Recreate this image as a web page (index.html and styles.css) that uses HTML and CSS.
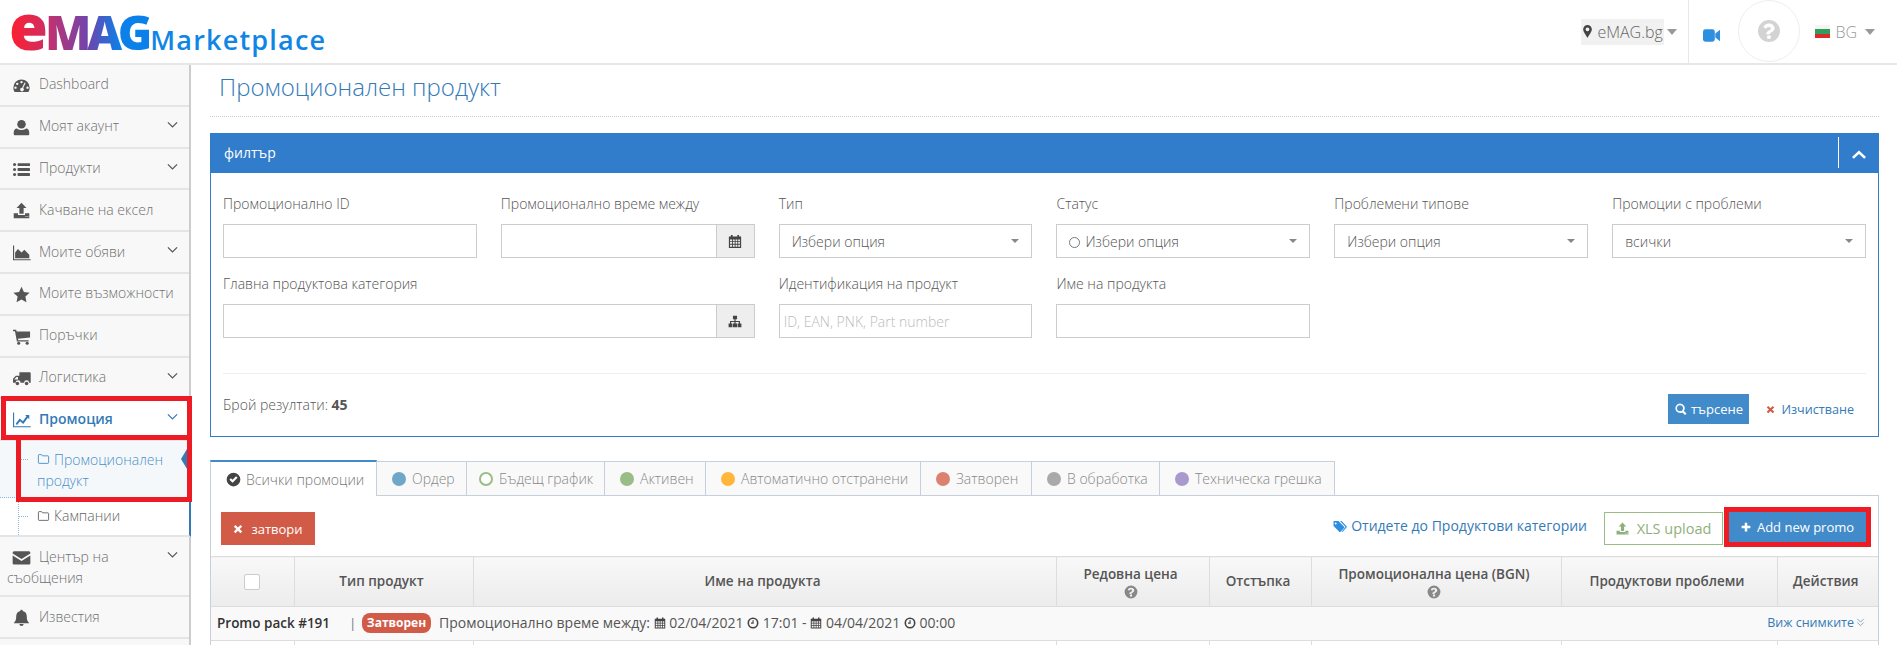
FILE: index.html
```html
<!DOCTYPE html>
<html lang="bg">
<head>
<meta charset="utf-8">
<title>Промоционален продукт</title>
<link rel="stylesheet" href="styles.css">
</head>
<body>
<svg class="defs" width="0" height="0" aria-hidden="true">
  <defs>
    <symbol id="i-gauge" viewBox="0 0 24 24"><path fill-rule="evenodd" d="M12 3.5A11.5 11.5 0 0 0 .5 15c0 2.300.7 4.400 1.800 6h19.400c1.100-1.600 1.800-3.700 1.800-6A11.500 11.500 0 0 0 12 3.500zM12 5.500a1.700 1.700 0 1 1 0 3.400a1.700 1.700 0 0 1 0-3.400zM6 8a1.700 1.700 0 1 1 0 3.400A1.700 1.700 0 0 1 6 8zM3.500 13.300a1.700 1.700 0 1 1 0 3.400a1.700 1.700 0 0 1 0-3.400zM20.500 13.300a1.700 1.700 0 1 1 0 3.400a1.700 1.700 0 0 1 0-3.400zM16.400 7.800l1.400.7l-3.400 7.200a2.600 2.600 0 1 1-1.500-.6z"/></symbol>
    <symbol id="i-user" viewBox="0 0 24 24"><circle cx="12" cy="7.500" r="6"/><path d="M3 23c-1.200 0-2-.8-2-2.200c0-3.800 1-7.300 4.500-7.300c1.500 1.300 3.800 2.200 6.500 2.200s5-.9 6.500-2.200c3.500 0 4.500 3.500 4.500 7.300c0 1.400-.8 2.200-2 2.200z"/></symbol>
    <symbol id="i-list" viewBox="0 0 24 24"><circle cx="2.200" cy="5" r="2.200"/><circle cx="2.200" cy="12" r="2.200"/><circle cx="2.200" cy="19" r="2.200"/><rect x="6.500" y="3" width="17.500" height="4" rx=".6"/><rect x="6.500" y="10" width="17.500" height="4" rx=".6"/><rect x="6.500" y="17" width="17.500" height="4" rx=".6"/></symbol>
    <symbol id="i-upload" viewBox="0 0 24 24"><path d="M12 1l7 7.500h-4v8h-6v-8H5z"/><path fill-rule="evenodd" d="M1 16h6v2.500h10V16h6v7H1zM17.500 20v1.200h1.400V20zM20.400 20v1.200h1.400V20z"/></symbol>
    <symbol id="i-area" viewBox="0 0 26 24"><path d="M1 2h1.600v19.500H26V23H1z"/><path d="M4 20v-8l4-5l5 5l4-4l7 7v5z"/></symbol>
    <symbol id="i-star" viewBox="0 0 24 24"><path d="M12 1l3.400 7.400l8 1l-5.900 5.500l1.500 8L12 19l-7 3.900l1.500-8L.6 9.400l8-1z"/></symbol>
    <symbol id="i-cart" viewBox="0 0 26 24"><path d="M1 2.500h4.500l.6 2.500h19v8.500L8 15.200l.4 2H23v2H6.500L3.800 4.500H1z"/><circle cx="9" cy="21.500" r="2.200"/><circle cx="21" cy="21.500" r="2.200"/></symbol>
    <symbol id="i-truck" viewBox="0 0 26 24"><path fill-rule="evenodd" d="M10 3h14.500c.8 0 1.500.7 1.500 1.500V18h-2.300a3.500 3.500 0 0 0-7 0h-5a3.500 3.500 0 0 0-7 0H1v-5.500L5 8h5zM8 10H5.800L3 13v.5h5z"/><circle cx="7.200" cy="19" r="2.500"/><circle cx="20.200" cy="19" r="2.500"/></symbol>
    <symbol id="i-line" viewBox="0 0 26 24"><path d="M1 2h1.600v19.500H26V23H1z"/><path d="M5 17.500l5.500-7l4.500 4l5-7l-2-2h6v6l-2-2l-6.500 9l-4.500-4l-4.500 5.500z"/></symbol>
    <symbol id="i-mail" viewBox="0 0 26 24"><path d="M3 3h20c1.400 0 2.500 1 2.500 2.200v1l-12.500 7.800L.5 6.200v-1C.5 4 1.600 3 3 3z"/><path d="M.5 9l12.500 7.800L25.500 9v11c0 1.300-1.100 2-2.500 2H3c-1.400 0-2.500-.7-2.500-2z"/></symbol>
    <symbol id="i-bell" viewBox="0 0 24 24"><path d="M12 1a1.700 1.700 0 0 1 1.700 1.900c3.800.8 5.800 3.700 5.800 7.600c0 5.500 1.400 7 3.500 9.500H1c2.100-2.500 3.500-4 3.500-9.500c0-3.900 2-6.800 5.800-7.600A1.700 1.700 0 0 1 12 1z"/><path d="M9 21h6a3 3 0 0 1-6 0z"/></symbol>
    <symbol id="i-chev" viewBox="0 0 12 8"><path d="M1 1.200l5 5l5-5" fill="none" stroke="currentColor" stroke-width="1.300"/></symbol>
    <symbol id="i-folder" viewBox="0 0 14 12"><path d="M1.500 10V2c0-.4.300-.7.700-.7h2.800l1 1.300h5.800c.4 0 .7.300.7.700V10c0 .4-.3.700-.7.700H2.200c-.4 0-.7-.3-.7-.7z" fill="none" stroke="currentColor" stroke-width="1"/></symbol>
    <symbol id="i-check" viewBox="0 0 24 24"><path fill-rule="evenodd" d="M12 1a11 11 0 1 1 0 22a11 11 0 0 1 0-22zM5.500 12.200l5 5l8-8l-2.400-2.400l-5.600 5.600l-2.600-2.600z"/></symbol>
    <symbol id="i-times" viewBox="0 0 24 24"><path d="M6 2.500l6 6l6-6l4 4l-6 5.500l6 6l-4 4l-6-6l-6 6l-4-4l6-6l-6-5.500z"/></symbol>
    <symbol id="i-plus" viewBox="0 0 24 24"><path d="M9 2h6v7h7.500v6H15v7.500H9V15H1.500V9H9z"/></symbol>
    <symbol id="i-search" viewBox="0 0 24 24"><path fill-rule="evenodd" d="M10 1a9.500 9.500 0 0 1 7.800 14.900l5.200 5.200l-3 3l-5.200-5.200A9.500 9.500 0 1 1 10 1zM10 4.500a6 6 0 1 0 0 12a6 6 0 0 0 0-12z"/></symbol>
    <symbol id="i-cal" viewBox="0 0 24 24"><path fill-rule="evenodd" d="M5 1h3v2.500h8V1h3v2.500h3.500V23h-21V3.500H5zM3.500 8.500v3h3.500v-3zM8.500 8.500v3h3v-3zM13 8.500v3h3v-3zM17.500 8.500v3h3v-3zM3.500 13v3h3.500v-3zM8.500 13v3h3v-3zM13 13v3h3v-3zM17.500 13v3h3v-3zM3.500 17.500v3.500h3.500v-3.500zM8.500 17.500v3.500h3v-3.500zM13 17.500v3.500h3v-3.500zM17.500 17.500v3.500h3v-3.500z"/></symbol>
    <symbol id="i-clock" viewBox="0 0 24 24"><path fill-rule="evenodd" d="M12 1a11 11 0 1 1 0 22a11 11 0 0 1 0-22zM12 4.200a7.800 7.800 0 1 0 0 15.600a7.800 7.800 0 0 0 0-15.600zM11 6.500h2.300v6.800H8v-2.200h3z"/></symbol>
    <symbol id="i-sitemap" viewBox="0 0 24 24"><path d="M8.500 2h7v6h-2.500v3h7.500v4.500H23V22h-6.500v-6.500h2V13H13v2.500h2.500V22h-7v-6.500H11V13H5.500v2.500h2V22H1v-6.500h2.500V11H11V8H8.500z"/></symbol>
    <symbol id="i-tags" viewBox="0 0 26 24"><path d="M2 2h9l10.500 10.500c.7.700.7 1.700 0 2.400L14.900 21.500c-.7.700-1.700.7-2.400 0L2 11zM6 4.500a1.800 1.800 0 1 0 0 3.600a1.800 1.800 0 0 0 0-3.600z" fill-rule="evenodd"/><path d="M14 2h3l9 9.500c.7.700.7 1.700 0 2.400L19 21.500h-2.500l7-7.500c.5-.6.500-1.200 0-1.800z"/></symbol>
    <symbol id="i-help" viewBox="0 0 24 24"><path fill-rule="evenodd" d="M12 1a11 11 0 1 1 0 22a11 11 0 0 1 0-22zM10.200 16.400v3.400h3.600v-3.400zM12 4.600c-2.800 0-4.800 1.400-5.500 3.600l2.500 1.500c.5-1 1.300-1.800 2.800-1.800c1.200 0 2 .6 2 1.500c0 1-.9 1.400-2 2.100c-1.400.9-2.600 1.700-2.600 3.500v.3h3.600c0-1.100.8-1.500 1.800-2.100c1.500-.9 3-1.900 3-4c0-2.700-2.700-4.600-5.600-4.600z"/></symbol>
    <symbol id="i-pin" viewBox="0 0 16 24"><path fill-rule="evenodd" d="M8 0a8 8 0 0 1 8 8c0 4-5 11-8 16C5 19 0 12 0 8a8 8 0 0 1 8-8zM8 4.500a3.500 3.500 0 1 0 0 7a3.500 3.500 0 0 0 0-7z"/></symbol>
    <symbol id="i-video" viewBox="0 0 18 13"><rect x="0" y="0" width="12.500" height="13" rx="2.500"/><path d="M13 4.500L18 .5v12L13 8.500z"/></symbol>
    <symbol id="i-up" viewBox="0 0 14 9"><path d="M7 .5l7 6.500l-1.800 1.800L7 4L1.800 8.800L0 7z"/></symbol>
    <symbol id="i-dbl" viewBox="0 0 10 10"><path d="M1.500 1l3.500 3.500L8.500 1M1.500 5l3.500 3.500L8.500 5" fill="none" stroke="currentColor" stroke-width="1"/></symbol>
  </defs>
</svg>

<header class="topbar">
  <a class="logo" href="#" aria-label="eMAG Marketplace">
    <span class="logo-e">e</span><span class="logo-mag">MAG</span><span class="logo-mp">Marketplace</span>
  </a>
  <div class="top-right">
    <div class="site-pick">
      <span class="site-chip"><svg class="ic ic-pin"><use href="#i-pin"/></svg>eMAG.bg</span>
      <span class="caret"></span>
    </div>
    <div class="top-video"><svg class="ic ic-video"><use href="#i-video"/></svg></div>
    <div class="top-help"><svg class="ic ic-help"><use href="#i-help"/></svg></div>
    <div class="top-lang">
      <span class="flag"><i class="fw"></i><i class="fg"></i><i class="fr"></i></span>
      <span class="lang-txt">BG</span>
      <span class="caret"></span>
    </div>
  </div>
</header>

<div class="layout">
  <nav class="sidebar">
    <a class="nav-item" href="#"><svg class="nav-ic"><use href="#i-gauge"/></svg><span class="nav-txt">Dashboard</span></a>
    <a class="nav-item" href="#"><svg class="nav-ic"><use href="#i-user"/></svg><span class="nav-txt">Моят акаунт</span><svg class="chev"><use href="#i-chev"/></svg></a>
    <a class="nav-item" href="#"><svg class="nav-ic"><use href="#i-list"/></svg><span class="nav-txt">Продукти</span><svg class="chev"><use href="#i-chev"/></svg></a>
    <a class="nav-item" href="#"><svg class="nav-ic"><use href="#i-upload"/></svg><span class="nav-txt">Качване на ексел</span></a>
    <a class="nav-item" href="#"><svg class="nav-ic"><use href="#i-area"/></svg><span class="nav-txt">Моите обяви</span><svg class="chev"><use href="#i-chev"/></svg></a>
    <a class="nav-item" href="#"><svg class="nav-ic"><use href="#i-star"/></svg><span class="nav-txt">Моите възможности</span></a>
    <a class="nav-item" href="#"><svg class="nav-ic"><use href="#i-cart"/></svg><span class="nav-txt">Поръчки</span></a>
    <a class="nav-item" href="#"><svg class="nav-ic"><use href="#i-truck"/></svg><span class="nav-txt">Логистика</span><svg class="chev"><use href="#i-chev"/></svg></a>
    <a class="nav-item nav-active" href="#"><svg class="nav-ic"><use href="#i-line"/></svg><span class="nav-txt">Промоция</span><svg class="chev"><use href="#i-chev"/></svg></a>
    <div class="submenu">
      <a class="sub-item sub-current" href="#"><i class="dash"></i><svg class="fold"><use href="#i-folder"/></svg>Промоционален продукт<span class="sub-arrow"></span></a>
      <a class="sub-item" href="#"><i class="dash"></i><svg class="fold"><use href="#i-folder"/></svg>Кампании</a>
    </div>
    <a class="nav-item nav-wrap" href="#"><svg class="nav-ic"><use href="#i-mail"/></svg>Център на съобщения<svg class="chev"><use href="#i-chev"/></svg></a>
    <a class="nav-item" href="#"><svg class="nav-ic"><use href="#i-bell"/></svg><span class="nav-txt">Известия</span></a>
    <div class="mark mark-promo"></div>
    <div class="mark mark-sub"></div>
  </nav>

  <main class="content">
    <h1 class="page-title">Промоционален продукт</h1>

    <section class="panel">
      <div class="panel-head">
        <span class="panel-title">филтър</span>
        <span class="panel-toggle"><svg class="ic ic-up"><use href="#i-up"/></svg></span>
      </div>
      <div class="panel-body">
        <div class="form-grid">
          <div class="field"><label>Промоционално ID</label><div class="input"></div></div>
          <div class="field"><label>Промоционално време между</label><div class="input input-add"><span class="addon"><svg class="ic ic-addon"><use href="#i-cal"/></svg></span></div></div>
          <div class="field"><label>Тип</label><div class="input select"><span>Избери опция</span><i class="sel-caret"></i></div></div>
          <div class="field"><label>Статус</label><div class="input select status"><span><i class="ring"></i>Избери опция</span><i class="sel-caret"></i></div></div>
          <div class="field"><label>Проблемени типове</label><div class="input select"><span>Избери опция</span><i class="sel-caret"></i></div></div>
          <div class="field"><label>Промоции с проблеми</label><div class="input select"><span>всички</span><i class="sel-caret"></i></div></div>
          <div class="field span2"><label>Главна продуктова категория</label><div class="input input-add"><span class="addon"><svg class="ic ic-addon"><use href="#i-sitemap"/></svg></span></div></div>
          <div class="field"><label>Идентификация на продукт</label><div class="input placeholder">ID, EAN, PNK, Part number</div></div>
          <div class="field"><label>Име на продукта</label><div class="input"></div></div>
        </div>
        <div class="panel-foot">
          <div class="count">Брой резултати: <b>45</b></div>
          <div class="foot-actions">
            <button class="btn btn-search"><svg class="ic ic-s"><use href="#i-search"/></svg>търсене</button>
            <a class="clear" href="#"><svg class="ic ic-x"><use href="#i-times"/></svg>Изчистване</a>
          </div>
        </div>
      </div>
    </section>

    <ul class="tabs">
      <li class="tab tab-active t-all"><svg class="ic ic-check"><use href="#i-check"/></svg>Всички промоции</li>
      <li class="tab t-order"><i class="dot d-blue"></i>Ордер</li>
      <li class="tab t-future"><i class="dot d-ring"></i>Бъдещ график</li>
      <li class="tab t-act"><i class="dot d-green"></i>Активен</li>
      <li class="tab t-auto"><i class="dot d-orange"></i>Автоматично отстранени</li>
      <li class="tab t-closed"><i class="dot d-red"></i>Затворен</li>
      <li class="tab t-proc"><i class="dot d-grey"></i>В обработка</li>
      <li class="tab t-tech"><i class="dot d-purple"></i>Техническа грешка</li>
    </ul>

    <section class="tab-box">
      <div class="toolbar">
        <button class="btn btn-close"><svg class="ic ic-w"><use href="#i-times"/></svg>затвори</button>
        <div class="tool-right">
          <a class="cat-link" href="#"><svg class="ic ic-tags"><use href="#i-tags"/></svg>Отидете до Продуктови категории</a>
          <button class="btn btn-xls"><svg class="ic ic-xup"><use href="#i-upload"/></svg>XLS upload</button>
          <button class="btn btn-add"><svg class="ic ic-w"><use href="#i-plus"/></svg>Add new promo</button>
        </div>
      </div>
      <table class="grid">
        <colgroup>
          <col class="c1"><col class="c2"><col class="c3"><col class="c4"><col class="c5"><col class="c6"><col class="c7"><col class="c8">
        </colgroup>
        <thead>
          <tr>
            <th><span class="checkbox"></span></th>
            <th>Тип продукт</th>
            <th>Име на продукта</th>
            <th>Редовна цена<svg class="ic ic-q"><use href="#i-help"/></svg></th>
            <th>Отстъпка</th>
            <th>Промоционална цена (BGN)<svg class="ic ic-q"><use href="#i-help"/></svg></th>
            <th>Продуктови проблеми</th>
            <th>Действия</th>
          </tr>
        </thead>
        <tbody>
          <tr class="group">
            <td colspan="8">
              <div class="group-row">
                <b class="pack">Promo pack #191</b>
                <span class="sep">|</span>
                <span class="badge">Затворен</span>
                <span class="period">Промоционално време между: <svg class="ic ic-t"><use href="#i-cal"/></svg> 02/04/2021 <svg class="ic ic-t"><use href="#i-clock"/></svg> 17:01 - <svg class="ic ic-t"><use href="#i-cal"/></svg> 04/04/2021 <svg class="ic ic-t"><use href="#i-clock"/></svg> 00:00</span>
                <a class="see" href="#">Виж снимките <svg class="ic ic-dbl"><use href="#i-dbl"/></svg></a>
              </div>
            </td>
          </tr>
          <tr class="blank"><td></td><td></td><td></td><td></td><td></td><td></td><td></td><td></td></tr>
        </tbody>
      </table>
    </section>
  </main>
</div>
</body>
</html>
```
FILE: styles.css
```css
*{box-sizing:border-box}
html,body{margin:0;padding:0;height:645px;overflow:hidden;background:#fff}
body{font-family:"Open Sans","Noto Sans",sans-serif;font-size:14px;color:#555}
a{text-decoration:none;color:inherit}
button{font-family:inherit}
.defs{position:absolute}
.ic{display:inline-block;fill:currentColor;flex:none}

.topbar{height:65px;border-bottom:2px solid #e7e7e7;display:flex;justify-content:space-between;background:#fff}
.logo{display:flex;align-items:baseline;height:63px;padding-left:9px}
.logo-e,.logo-mag{color:transparent;-webkit-background-clip:text;background-clip:text}
.logo-e{display:inline-block;font-weight:800;font-size:63px;line-height:63px;margin-top:-10px;width:42px;margin-right:-6px;background-image:linear-gradient(90deg,#ff1f2d,#c9306a)}
.logo-mag{display:inline-block;font-weight:800;font-size:48px;line-height:63px;letter-spacing:-4.200px;background-image:linear-gradient(90deg,#c9306a,#6e45ae 42%,#0a80e8 72%)}
.logo-mp{font-weight:600;font-size:27px;line-height:63px;letter-spacing:1.200px;color:#0f86e6;margin-left:1px}

.top-right{display:flex;height:63px}
.site-pick{display:flex;align-items:center;padding-right:11px;height:63px;gap:3px}
.site-chip{display:flex;align-items:center;height:26px;background:#f1f1f1;padding:0 2px;font-size:16px;font-weight:300;color:#666;width:83px}
.ic-pin{width:9px;height:13px;margin-right:5px;color:#444}
.caret{display:inline-block;width:0;height:0;border:5px solid transparent;border-top:6px solid #999;border-bottom:0}
.top-video{width:50px;border-left:1px solid #e7e7e7;padding:29px 0 0 14px}
.ic-video{width:17px;height:13px;color:#2e8fe0;display:block}
.top-help{width:62px;height:62px;border:1px solid #eee;border-radius:50%;display:flex;align-items:center;justify-content:center}
.ic-help{width:24px;height:24px;color:#d3d3d3}
.top-lang{display:flex;align-items:center;padding:0 22px 0 15px;gap:5px;height:63px}
.flag{display:flex;flex-direction:column;width:15px;height:13px}
.flag i{flex:1;display:block}
.fw{background:#f4f4f4}.fg{background:#2f9e5b}.fr{background:#d92b2b}
.lang-txt{font-size:16px;font-weight:300;color:#999;margin-right:3px}

.layout{display:flex;height:580px;overflow:hidden}
.sidebar{position:relative;width:191px;flex:none;background:#f8f8f8;border-right:2px solid #ccc;font-size:14px;font-weight:300;color:#707070}
.nav-item{display:flex;align-items:center;height:41.800px;padding-left:39px;border-bottom:2px solid #e5e5e5;position:relative}
.nav-txt{position:relative;top:-1px}
.nav-ic{position:absolute;left:12px;top:12px;width:19px;height:17px;fill:#555}
.chev{position:absolute;left:167px;top:14px;width:11px;height:8px;color:#555}
.nav-active{background:#fff;color:#337ab7;font-weight:600}
.nav-active .nav-ic{fill:#337ab7}
.nav-active .chev{color:#337ab7}
.submenu{background:#fff;border-right:2px solid #337ab7;margin-right:-2px;position:relative;border-bottom:2px solid #e5e5e5}
.sub-item{display:block;position:relative;padding:7px 22px 5px 37px;line-height:21px;color:#666;text-indent:17px;height:37px}
.sub-current{background:#f5f8fb;color:#4a90c8;height:57px;padding-top:8px;border-bottom:1px dotted #8db8dc}
.fold{position:absolute;left:37px;top:12px;width:13px;height:12px;color:currentColor}
.dash{position:absolute;left:18px;top:0;bottom:0;border-left:1px dotted #8db8dc}
.dash::after{content:"";position:absolute;left:0;top:18px;width:9px;border-top:1px dotted #8db8dc}
.sub-arrow{position:absolute;left:181px;top:8px;width:0;height:0;border-style:solid;border-width:10px 6px 10px 0;border-color:transparent #337ab7 transparent transparent}
.nav-wrap{display:block;height:60px;padding:9px 28px 0 7px;line-height:21px;text-indent:32px}
.mark{position:absolute;border:5px solid #ed1c24;pointer-events:none}
.mark-promo{left:1px;top:331px;width:191px;height:44px}
.mark-sub{left:16px;top:375px;width:176px;height:62px;border-top:0}

.content{flex:1;min-width:0;padding:0 18px 0 19px}
.page-title{margin:0;height:52px;padding:9px 0 0 9px;font-size:24px;line-height:26px;font-weight:300;color:#337ab7;border-bottom:1px dotted #ccc}

.panel{margin-top:16px;border:1px solid #317dcb;border-top:0}
.panel-head{height:40px;background:#317dcb;margin:0 -1px;display:flex;justify-content:space-between;align-items:center;color:#fff;padding-left:14px}
.panel-title{font-size:14px;font-weight:400;position:relative;top:-1px}
.panel-toggle{width:41px;height:31px;border-left:1px solid #fff;display:flex;align-items:center;justify-content:center;margin-top:-2px}
.ic-up{width:14px;height:9px;color:#fff;margin-top:5px}
.panel-body{padding:21px 12px 0}
.form-grid{display:grid;grid-template-columns:repeat(6,1fr);column-gap:24px;row-gap:16px}
.field label{display:block;font-size:14px;font-weight:300;line-height:20px;margin-bottom:10px;color:#555}
.span2{grid-column:span 2}
.input{height:34px;border:1px solid #ccc;background:#fff;display:flex;align-items:center;font-size:14px;font-weight:300;color:#666;position:relative}
.input-add{justify-content:flex-end}
.addon{width:38px;height:32px;background:#eee;border-left:1px solid #ccc;display:flex;align-items:center;justify-content:center}
.ic-addon{width:14px;height:15px;color:#444}
.select{padding:0 12px;justify-content:space-between;color:#777;font-weight:400}
.select span{font-weight:300;color:#555}
.ring{display:inline-block;width:11px;height:11px;border:1px solid #777;border-radius:50%;margin-right:5px;vertical-align:-1px}
.sel-caret{width:0;height:0;border:4px solid transparent;border-top:4px solid #888;border-bottom:0}
.placeholder{padding-left:4px;font-size:14px;color:#bbb}
.panel-foot{margin-top:35px;border-top:1px solid #eee;padding-top:20px;display:flex;justify-content:space-between;align-items:flex-start;height:63px}
.count{font-size:14px;font-weight:300;line-height:22px;color:#555}
.count b{font-weight:700;color:#555}
.foot-actions{display:flex;align-items:center;gap:17px;padding-right:12px}
.btn{border:0;display:inline-flex;align-items:center;cursor:pointer;font-size:13px;padding:0}
.btn-search{height:30px;width:81px;background:#428bca;color:#fff;justify-content:center;gap:4px;font-size:13px}
.ic-s{width:12px;height:12px;color:#fff}
.clear{display:flex;align-items:center;gap:6px;font-size:12.600px;font-weight:400;color:#337ab7}
.ic-x{width:9px;height:9px;color:#d15b47}

.tabs{list-style:none;margin:23px 0 0;padding:0;display:flex;height:36px;position:relative;z-index:1;font-size:14px;font-weight:300;color:#888}
.tab{display:flex;align-items:center;background:#f9f9f9;border:1px solid #c5d0dc;border-left:0;padding:0 0 0 15px;gap:6px;margin-top:1px;height:35px}
.tab-active{background:#fff;border:1px solid #c5d0dc;border-top:2px solid #428bca;border-bottom:0;margin-top:0;height:36px;padding-left:15px;gap:5px;color:#777}
.t-all{width:167px}.t-order{width:90px}.t-future{width:138px;padding-left:12px}.t-act{width:101px}.t-auto{width:215px}.t-closed{width:111px}.t-proc{width:128px}.t-tech{width:175px}
.ic-check{width:15px;height:15px;color:#444}
.dot{display:block;width:14px;height:14px;border-radius:50%}
.d-blue{background:#6fa7c7}.d-green{background:#9abc87}.d-orange{background:#ffb63b}.d-red{background:#dc8070}.d-grey{background:#a9a9a9}.d-purple{background:#a999cf}
.d-ring{border:2px solid #9abc87;background:#fff}

.tab-box{border:1px solid #c5d0dc;border-bottom:0;margin-top:-1px;padding-top:16px;height:151px;overflow:hidden}
.toolbar{display:flex;justify-content:space-between;align-items:flex-start;padding:0 12px 0 10px;height:33px}
.btn-close{height:33px;width:94px;background:#d15b47;color:#fff;justify-content:center;gap:8px;font-size:13px}
.ic-w{width:10px;height:10px;color:#fff}
.tool-right{display:flex;align-items:flex-start}
.cat-link{display:flex;align-items:center;gap:4px;font-size:14px;line-height:28px;color:#337ab7;margin-right:17px}
.ic-tags{width:15px;height:13px;color:#2e8fe0}
.btn-xls{width:119px;height:33px;background:#fff;border:1px solid #9abc87;color:#8fb07c;justify-content:center;gap:8px;margin-right:6px;font-size:14.500px}
.ic-xup{width:13px;height:13px;color:#8fb07c}
.btn-add{width:137px;height:30px;background:#428bca;color:#fff;justify-content:center;gap:6px;outline:5px solid #ed1c24}

.grid{width:1667px;table-layout:fixed;border-collapse:collapse;margin-top:11px;font-size:13.500px}
.c1{width:83px}.c2{width:179px}.c3{width:583px}.c4{width:153px}.c5{width:102px}.c6{width:250px}.c7{width:216px}.c8{width:101px}
.grid th{height:50px;padding:0 7px 0 3px;font-weight:600;line-height:19px;color:#555;text-align:center;background:linear-gradient(#f8f8f8,#ececec);border:1px solid #ddd}
.grid th:first-child{padding:0}
.grid th:first-child,.grid td:first-child{border-left:0}
.grid th:last-child,.grid td:last-child{border-right:0}
.checkbox{display:inline-block;width:16px;height:16px;background:#fff;border:1px solid #ccc;border-radius:2px;vertical-align:middle}
.ic-q{display:block;width:14px;height:14px;margin:1px auto 0;color:#888}
.group td{height:34px;padding:0;background:#f9f9f9;border:1px solid #ddd}
.group-row{display:flex;align-items:center;height:32px;padding:0 13px 2px 6px;color:#555}
.pack{font-weight:600;font-size:13.500px;color:#333;width:132px}
.sep{width:13px;color:#777}
.badge{background:#d15b47;color:#fff;font-weight:700;font-size:12px;height:20px;line-height:20px;border-radius:8px;width:69px;text-align:center;margin-right:8px}
.period{font-size:14px;font-weight:400;white-space:pre-wrap}
.ic-t{width:12px;height:12px;vertical-align:-1px;color:#444}
.see{margin-left:auto;font-size:12.500px;color:#337ab7;display:flex;align-items:center;gap:2px;font-weight:400}
.ic-dbl{width:9px;height:9px;color:#7a9cc0}
.blank td{height:30px;border-left:1px solid #ddd;border-right:1px solid #ddd}
```
